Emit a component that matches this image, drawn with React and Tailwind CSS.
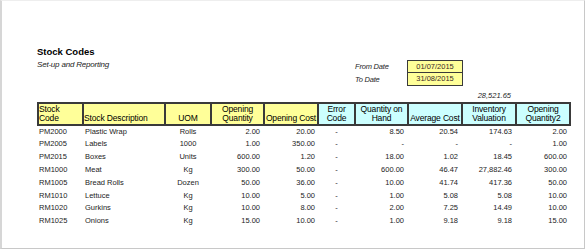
import React from 'react';

const rows = [
  ['PM2000', 'Plastic Wrap', 'Rolls', '2.00', '20.00', '-', '8.50', '20.54', '174.63', '2.00'],
  ['PM2005', 'Labels', '1000', '1.00', '350.00', '-', '-', '-', '-', '1.00'],
  ['PM2015', 'Boxes', 'Units', '600.00', '1.20', '-', '18.00', '1.02', '18.45', '600.00'],
  ['RM1000', 'Meat', 'Kg', '300.00', '50.00', '-', '600.00', '46.47', '27,882.46', '300.00'],
  ['RM1005', 'Bread Rolls', 'Dozen', '50.00', '36.00', '-', '10.00', '41.74', '417.36', '50.00'],
  ['RM1010', 'Lettuce', 'Kg', '10.00', '5.00', '-', '1.00', '5.08', '5.08', '10.00'],
  ['RM1020', 'Gurkins', 'Kg', '10.00', '8.00', '-', '2.00', '7.25', '14.49', '10.00'],
  ['RM1025', 'Onions', 'Kg', '15.00', '10.00', '-', '1.00', '9.18', '9.18', '15.00'],
];

const cols = [
  { w: 'w-[45px]', head: ['Stock', 'Code'], bg: 'bg-[#ffff99]', ha: 'text-left', da: 'text-left pl-[1px]' },
  { w: 'w-[82px]', head: ['Stock Description'], bg: 'bg-[#ffff99]', ha: 'text-left', da: 'text-left pl-[2px]' },
  { w: 'w-[46px]', head: ['UOM'], bg: 'bg-[#ffff99]', ha: 'text-center', da: 'text-center' },
  { w: 'w-[53px]', head: ['Opening', 'Quantity'], bg: 'bg-[#ffff99]', ha: 'text-center', da: 'text-right pr-[4px]' },
  { w: 'w-[54px]', head: ['Opening Cost'], bg: 'bg-[#ffff99]', ha: 'text-center', da: 'text-right pr-[3px]' },
  { w: 'w-[37px]', head: ['Error', 'Code'], bg: 'bg-[#ccffff]', ha: 'text-center', da: 'text-center' },
  { w: 'w-[53px]', head: ['Quantity on', 'Hand'], bg: 'bg-[#ccffff]', ha: 'text-center', da: 'text-right pr-[4px]' },
  { w: 'w-[54px]', head: ['Average Cost'], bg: 'bg-[#ccffff]', ha: 'text-center', da: 'text-right pr-[4px]' },
  { w: 'w-[54px]', head: ['Inventory', 'Valuation'], bg: 'bg-[#ccffff]', ha: 'text-center', da: 'text-right pr-[4px]' },
  { w: 'w-[54px]', head: ['Opening', 'Quantity2'], bg: 'bg-[#ccffff]', ha: 'text-center', da: 'text-right pr-[3px]' },
];

export default function StockCodes() {
  return (
    <div className="w-[585px] h-[249px] bg-white border-l-2 border-l-[#d6d6d6] border-t border-t-[#eeeeee] border-r border-r-[#c8c8c8] border-b border-b-[#c8c8c8] font-['Liberation_Sans',Arial,sans-serif] text-[#1c1c1c] overflow-hidden">
      <div className="pl-[35px] pt-[44px]">
        {/* titel + datums */}
        <div className="flex h-[42px]">
          <div className="w-[318px]">
            <div className="text-[9.5px] font-bold leading-[13px] text-black">Stock Codes</div>
            <div className="text-[8px] italic leading-[12px] tracking-[-0.2px] mt-[1px]">Set-up and Reporting</div>
          </div>
          <div className="pt-[15px]">
            {[['From Date', '01/07/2015'], ['To Date', '31/08/2015']].map(([label, date], i) => (
              <div key={label} className="flex h-[13px] items-stretch">
                <div className="w-[52px] text-[7.5px] italic leading-[13px] tracking-[-0.2px]">{label}</div>
                <div className={`w-[56px] bg-[#ffff99] border border-[#3a3a3a] ${i === 1 ? 'border-t-0' : ''} text-[7.5px] leading-[11px] text-center text-[#3a2a2a]`}>
                  {date}
                </div>
              </div>
            ))}
          </div>
        </div>

        <div className="w-[532px] h-[15px] pt-[3px] text-right pr-[58px] text-[7.5px] italic leading-[12px]">28,521.65</div>

        <table className="table-fixed border-collapse w-[532px]">
          <colgroup>
            {cols.map((c, i) => <col key={i} className={c.w} />)}
          </colgroup>
          <thead>
            <tr>
              {cols.map((c, i) => (
                <th
                  key={i}
                  className={`${c.bg} ${c.ha} h-[22px] border-2 border-[#3a3a3a] align-bottom font-normal text-[8.5px] leading-[9px] tracking-[-0.15px] text-black px-0 pb-[1px]`}
                >
                  {c.head.map((h) => <div key={h} className="whitespace-nowrap">{h}</div>)}
                </th>
              ))}
            </tr>
          </thead>
          <tbody>
            {rows.map((r) => (
              <tr key={r[0]} className="h-[12.8px]">
                {r.map((v, i) => (
                  <td key={i} className={`${cols[i].da} h-[12.8px] text-[7.5px] leading-[12px] p-0 whitespace-nowrap`}>
                    {v}
                  </td>
                ))}
              </tr>
            ))}
          </tbody>
        </table>
      </div>
    </div>
  );
}
